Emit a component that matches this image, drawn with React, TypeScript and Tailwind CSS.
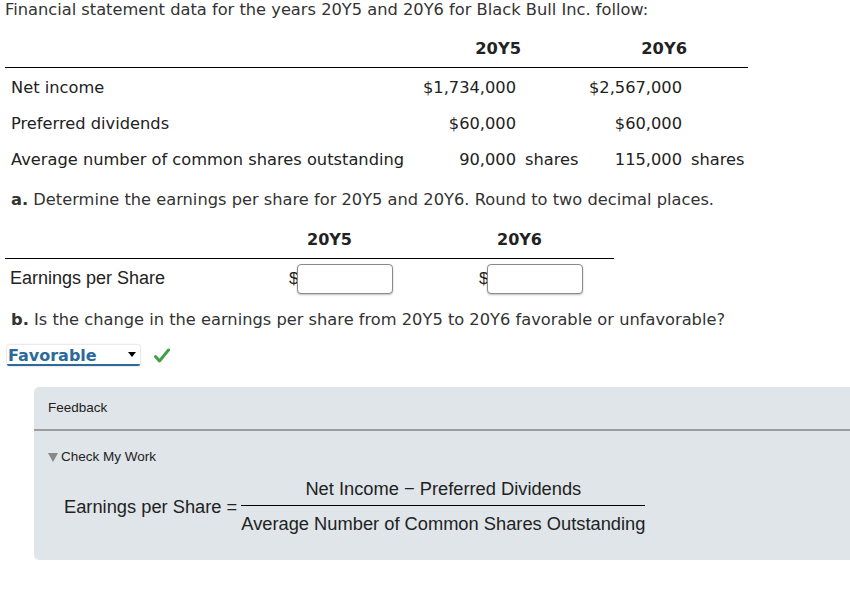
import React from 'react'

const body = { fontFamily: '"DejaVu Sans", Verdana, sans-serif' }
const arial = { fontFamily: '"Liberation Sans", Arial, sans-serif' }

const ROWS = [
  { label: 'Net income', a: '$1,734,000', b: '$2,567,000', unit: '' },
  { label: 'Preferred dividends', a: '$60,000', b: '$60,000', unit: '' },
  { label: 'Average number of common shares outstanding', a: '90,000', b: '115,000', unit: 'shares' },
]

function MoneyInput() {
  return (
    <div className="flex items-center">
      <span className="text-[17px] text-[#222] w-[8px]" style={arial}>$</span>
      <input
        type="text"
        className="w-[96px] h-[30px] bg-white border border-[#8a8a8a] rounded-[4px] shadow-[0_1px_2px_rgba(0,0,0,0.25)] outline-none"
      />
    </div>
  )
}

export default function App() {
  return (
    <div className="w-[850px] h-[598px] bg-white overflow-hidden text-[#333]" style={body}>
      <p className="pl-[5px] text-[16.25px] leading-[19px]">
        Financial statement data for the years 20Y5 and 20Y6 for Black Bull Inc. follow:
      </p>

      <div className="ml-[5px] w-[743px] mt-[12px] text-[16.25px] text-[#222]">
        <div className="grid grid-cols-[415px_96px_70px_96px_66px] h-[37px] items-center border-b border-black">
          <div />
          <div className="text-right font-bold -mr-[5px]">20Y5</div>
          <div />
          <div className="text-right font-bold -mr-[5px]">20Y6</div>
          <div />
        </div>
        <div className="pt-[2px]">
          {ROWS.map((r) => (
            <div key={r.label} className="grid grid-cols-[415px_96px_70px_96px_66px] h-[36px] items-center">
              <div className="pl-[6px]">{r.label}</div>
              <div className="text-right">{r.a}</div>
              <div className="pl-[9px]">{r.unit}</div>
              <div className="text-right">{r.b}</div>
              <div className="pl-[9px]">{r.unit}</div>
            </div>
          ))}
        </div>
      </div>

      <p className="pl-[11px] mt-[13px] text-[16.25px] leading-[18px]">
        <span className="font-bold">a.</span> Determine the earnings per share for 20Y5 and 20Y6. Round to two decimal places.
      </p>

      <div className="ml-[5px] w-[609px] mt-[13px] text-[#222]">
        <div className="grid grid-cols-[284px_190px_135px] h-[37px] items-center border-b border-black text-[16px]">
          <div />
          <div className="font-bold pl-[18px]">20Y5</div>
          <div className="font-bold pl-[18px]">20Y6</div>
        </div>
        <div className="grid grid-cols-[284px_190px_135px] h-[38px] items-center pt-[1px]">
          <div className="pl-[5px] text-[18px]" style={arial}>Earnings per Share</div>
          <MoneyInput />
          <MoneyInput />
        </div>
      </div>

      <p className="pl-[11px] mt-[14px] text-[16.25px] leading-[18px]">
        <span className="font-bold">b.</span> Is the change in the earnings per share from 20Y5 to 20Y6 favorable or unfavorable?
      </p>

      <div className="flex items-center mt-[16px] pl-[7px] gap-[14px]">
        <div className="relative w-[133px] h-[21px] bg-white rounded-[2px] border-b-[2px] border-[#2b6a9b] shadow-[0_0_2px_rgba(0,0,0,0.3)]">
          <span className="absolute left-[1px] top-[-1px] text-[16px] font-bold text-[#2b6a9b]">Favorable</span>
          <svg className="absolute right-[4px] top-[7px]" width="8" height="5" viewBox="0 0 8 5">
            <path d="M0 0h8L4 5z" fill="#000" />
          </svg>
        </div>
        <svg width="16" height="16" viewBox="0 0 16 16">
          <path d="M1.5 8.5l4 4.5L14.5 2" fill="none" stroke="#43a047" strokeWidth="3" strokeLinecap="round" strokeLinejoin="round" />
        </svg>
      </div>

      <div className="ml-[34px] mt-[21px] h-[173px] bg-[#dfe5e9] rounded-l-[5px]" style={arial}>
        <div className="h-[44px] pl-[14px] pt-[11px] text-[13.5px] text-[#222] border-b-[2px] border-[#9a9ea1]">Feedback</div>
        <div className="flex items-center pl-[14px] mt-[16px] text-[13.5px] text-[#222]">
          <svg width="10" height="10" viewBox="0 0 10 10" className="mr-[3px]">
            <path d="M0 1h10L5 10z" fill="#888" />
          </svg>
          Check My Work
        </div>
        <div className="flex items-center pl-[30px] mt-[12px] text-[18.3px] text-[#222]">
          <span className="mr-[4px]">Earnings per Share =</span>
          <div className="flex flex-col items-center">
            <span className="leading-[20px] pb-[6px]">Net Income − Preferred Dividends</span>
            <span className="border-t border-black leading-[20px] pt-[8px]">Average Number of Common Shares Outstanding</span>
          </div>
        </div>
      </div>
    </div>
  )
}
